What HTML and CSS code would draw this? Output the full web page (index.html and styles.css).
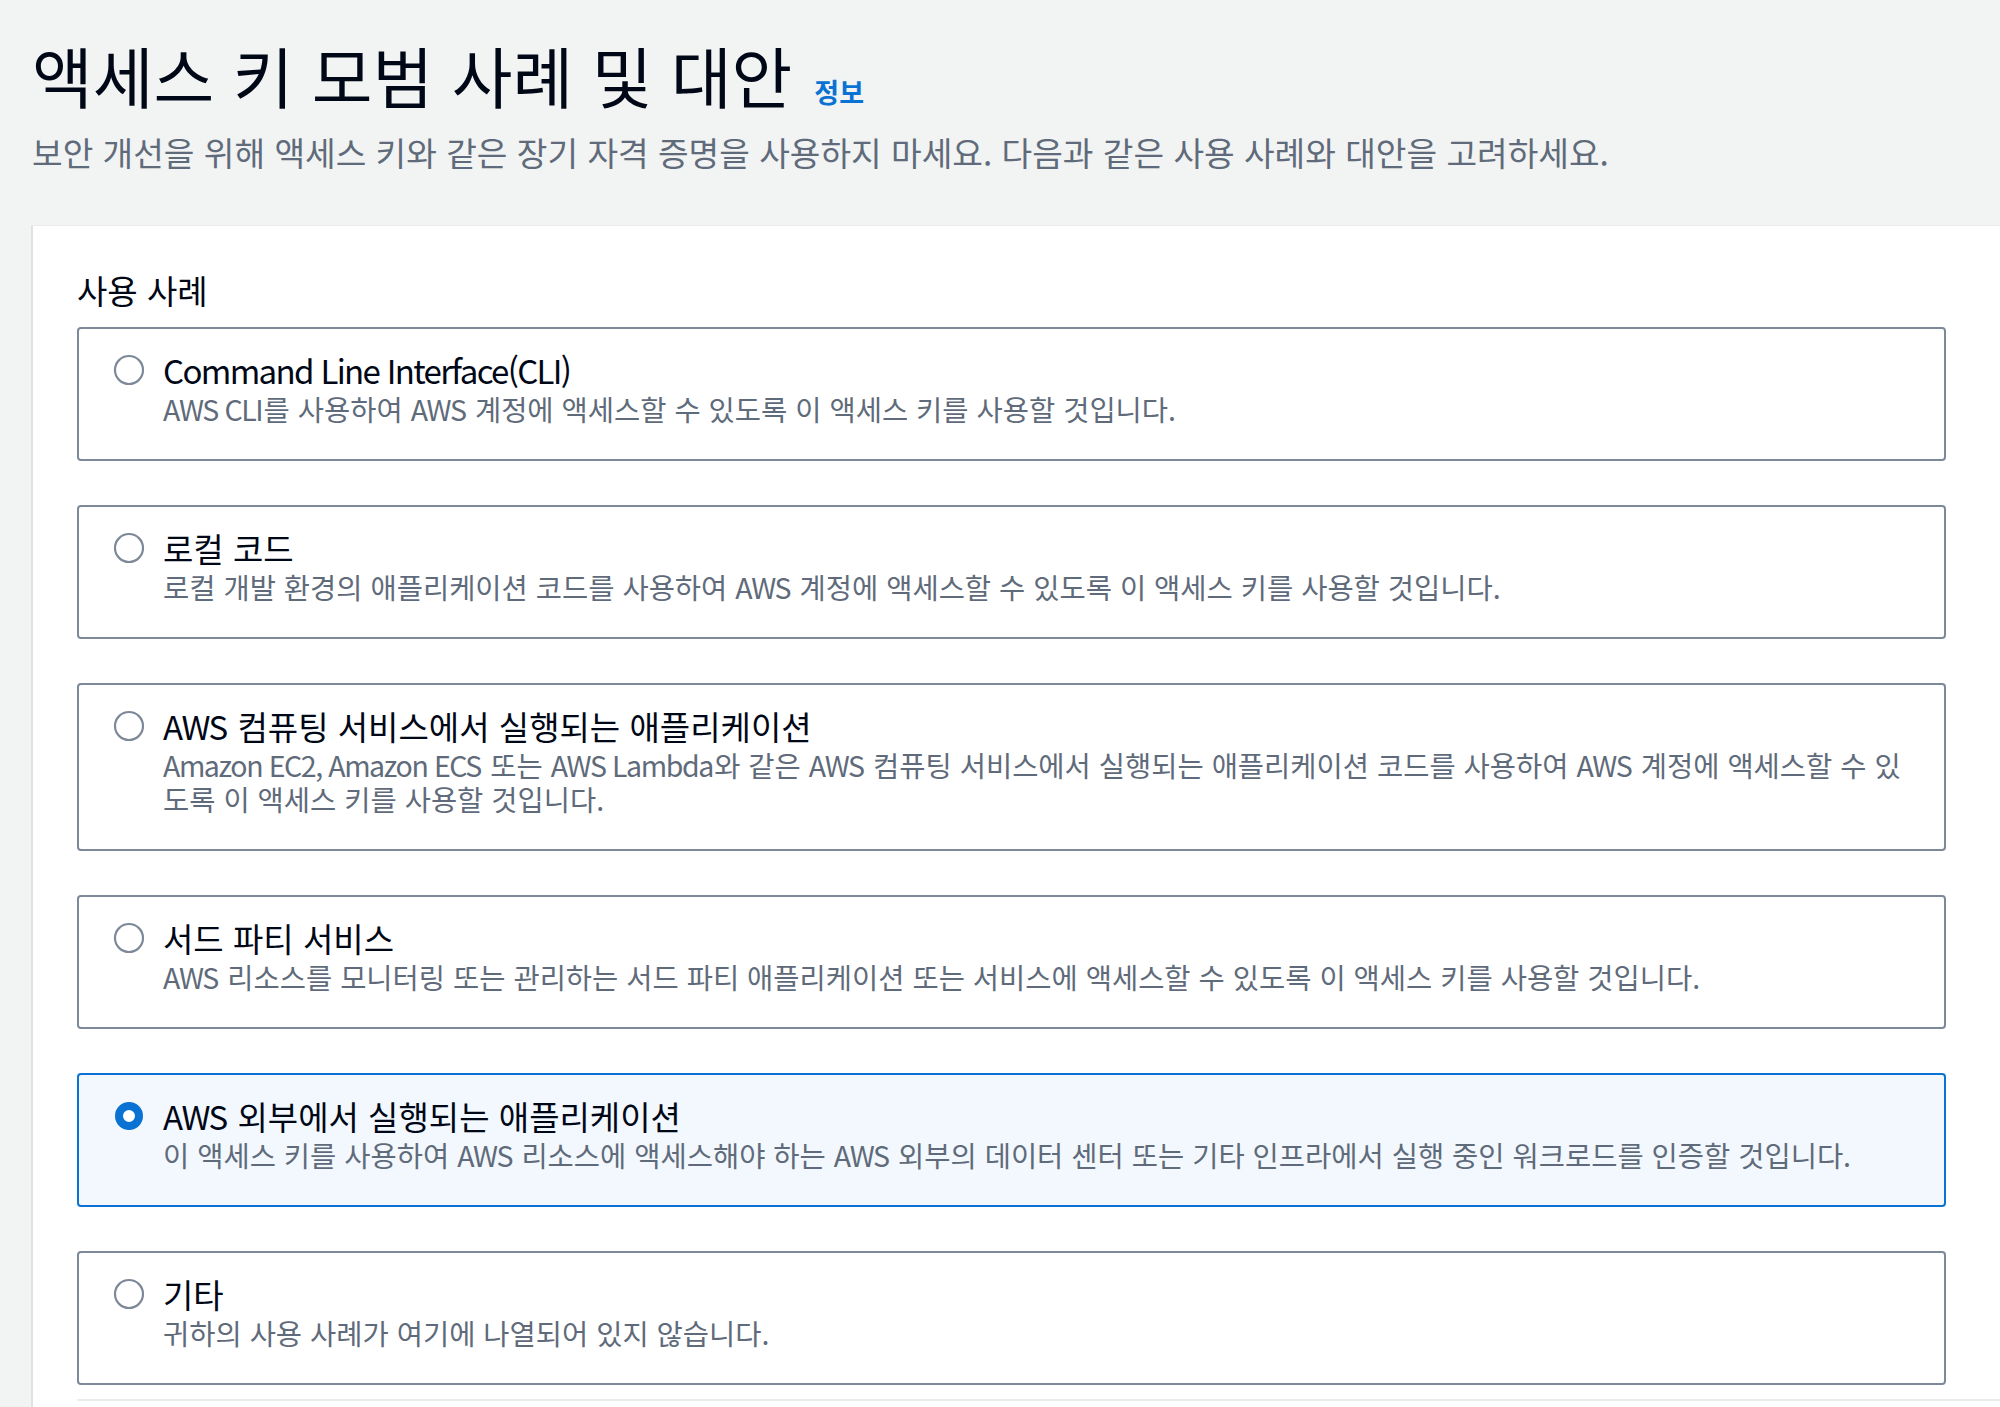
FILE: index.html
```html
<!DOCTYPE html>
<html lang="ko">

<head>
    <meta charset="UTF-8">
    <meta name="viewport" content="width=device-width, initial-scale=1.0">
    <title>액세스 키 모범 사례 및 대안</title>
    <link rel="stylesheet" href="styles.css">
</head>

<body>

    <div class="page-header">
        <h1 class="page-title">액세스 키 모범 사례 및 대안<a class="info-link" href="#">정보</a></h1>
        <p class="page-desc">보안 개선을 위해 액세스 키와 같은 장기 자격 증명을 사용하지 마세요. 다음과 같은 사용 사례와 대안을 고려하세요.</p>
    </div>

    <div class="panel">
        <div class="field-label">사용 사례</div>

        <div class="tiles">
            <label class="tile">
                <svg class="radio" viewBox="0 0 16 16"><circle cx="8" cy="8" r="7" /></svg>
                <div class="tile-text">
                    <div class="tile-title"><span class="en">Command Line Interface(CLI)</span></div>
                    <div class="tile-desc"><span class="en">AWS CLI</span>를 사용하여 <span class="en">AWS</span> 계정에 액세스할 수 있도록 이 액세스 키를 사용할 것입니다.</div>
                </div>
            </label>

            <label class="tile">
                <svg class="radio" viewBox="0 0 16 16"><circle cx="8" cy="8" r="7" /></svg>
                <div class="tile-text">
                    <div class="tile-title">로컬 코드</div>
                    <div class="tile-desc">로컬 개발 환경의 애플리케이션 코드를 사용하여 <span class="en">AWS</span> 계정에 액세스할 수 있도록 이 액세스 키를 사용할 것입니다.</div>
                </div>
            </label>

            <label class="tile">
                <svg class="radio" viewBox="0 0 16 16"><circle cx="8" cy="8" r="7" /></svg>
                <div class="tile-text">
                    <div class="tile-title"><span class="en">AWS</span> 컴퓨팅 서비스에서 실행되는 애플리케이션</div>
                    <div class="tile-desc"><span class="en">Amazon EC2, Amazon ECS</span> 또는 <span class="en">AWS Lambda</span>와 같은 <span class="en">AWS</span> 컴퓨팅 서비스에서 실행되는 애플리케이션 코드를 사용하여 <span class="en">AWS</span> 계정에 액세스할 수 있도록 이 액세스 키를 사용할 것입니다.</div>
                </div>
            </label>

            <label class="tile">
                <svg class="radio" viewBox="0 0 16 16"><circle cx="8" cy="8" r="7" /></svg>
                <div class="tile-text">
                    <div class="tile-title">서드 파티 서비스</div>
                    <div class="tile-desc"><span class="en">AWS</span> 리소스를 모니터링 또는 관리하는 서드 파티 애플리케이션 또는 서비스에 액세스할 수 있도록 이 액세스 키를 사용할 것입니다.</div>
                </div>
            </label>

            <label class="tile selected">
                <svg class="radio" viewBox="0 0 16 16"><circle cx="8" cy="8" r="5" /></svg>
                <div class="tile-text">
                    <div class="tile-title"><span class="en">AWS</span> 외부에서 실행되는 애플리케이션</div>
                    <div class="tile-desc">이 액세스 키를 사용하여 <span class="en">AWS</span> 리소스에 액세스해야 하는 <span class="en">AWS</span> 외부의 데이터 센터 또는 기타 인프라에서 실행 중인 워크로드를 인증할 것입니다.</div>
                </div>
            </label>

            <label class="tile">
                <svg class="radio" viewBox="0 0 16 16"><circle cx="8" cy="8" r="7" /></svg>
                <div class="tile-text">
                    <div class="tile-title">기타</div>
                    <div class="tile-desc">귀하의 사용 사례가 여기에 나열되어 있지 않습니다.</div>
                </div>
            </label>
        </div>

        <div class="divider"></div>
    </div>

</body>

</html>
```

FILE: styles.css
```css
html,
body {
    margin: 0;
    padding: 0;
}

body {
    background-color: #f2f3f3;
    font-family: "Noto Sans CJK KR", "Noto Sans", sans-serif;
    color: #000716;
    overflow: hidden;
    height: 1407px;
}

/* latin runs are a bit condensed in the original */
.en {
    letter-spacing: -0.05em;
    padding-right: 0.05em;
}

.page-header {
    padding: 35px 0 0 32px;
}

.page-title {
    margin: 0;
    font-size: 66px;
    line-height: 79px;
    font-weight: 400;
    color: #000716;
}

.info-link {
    margin-left: 22px;
    font-size: 27px;
    font-weight: 700;
    color: #0972d3;
    text-decoration: none;
}

.page-desc {
    margin: -1px 0 0 0;
    font-size: 33.3px;
    line-height: 44px;
    color: #5f6b7a;
}

.panel {
    margin: 51px 0 0 31px;
    background-color: #ffffff;
    border-left: 2px solid #dfe2e4;
    border-top: 1px solid #e9ebed;
    padding: 42px 0 0 44px;
    height: 1300px;
}

.field-label {
    font-size: 33px;
    line-height: 44px;
    color: #000716;
}

.tiles {
    display: flex;
    flex-direction: column;
    gap: 44px;
    margin: 15px 54px 0 0;
}

.tile {
    display: flex;
    align-items: flex-start;
    gap: 18px;
    border: 2px solid #7d8998;
    border-radius: 4px;
    padding: 19px 35px 33px 34px;
    background-color: #ffffff;
}

.tile.selected {
    border-color: #0972d3;
    background-color: #f2f8fd;
}

.radio {
    flex: none;
    width: 32px;
    height: 32px;
    margin-top: 6px;
    fill: #ffffff;
    stroke: #7d8998;
    stroke-width: 1.1;
}

.tile.selected .radio {
    stroke: #0972d3;
    stroke-width: 4;
}

.tile-text {
    flex: 1;
    min-width: 0;
}

.tile-title {
    font-size: 33px;
    line-height: 44px;
    color: #000716;
}

.tile-desc {
    font-size: 28.5px;
    line-height: 34px;
    color: #5f6b7a;
}

.divider {
    margin-top: 14px;
    border-top: 2px solid #e9ebed;
}
```
